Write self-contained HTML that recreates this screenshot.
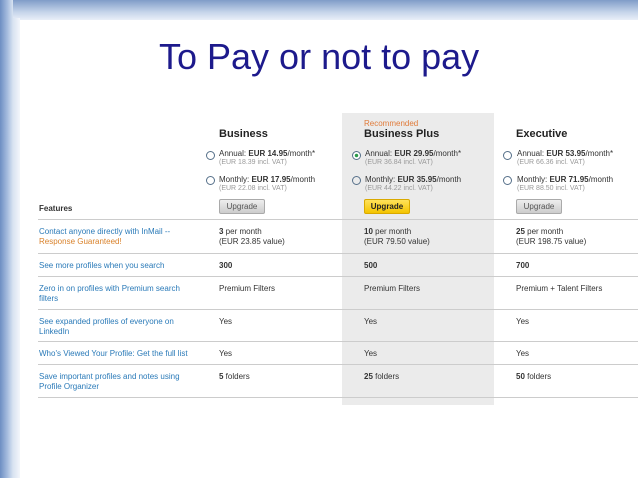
<!DOCTYPE html>
<html><head><style>
body{margin:0;width:638px;height:478px;overflow:hidden;background:#fff;position:relative;font-family:"Liberation Sans",Arial,sans-serif;}
.a{position:absolute;white-space:nowrap}
.s{font-size:8px;color:#333}
.l{font-size:8px;color:#2a7ab8}
.g{font-size:7px;color:#999}
.h{font-size:11px;font-weight:bold;color:#222}
.r{width:7px;height:7px;border:1px solid #56708a;border-radius:50%;position:absolute}
.ln{position:absolute;left:38px;right:0;height:1px;background:#ccc}
.btn{position:absolute;width:44px;height:13px;border:1px solid #aaa;border-radius:2px;background:linear-gradient(#eee,#ccc);font-size:8px;color:#555;text-align:center;line-height:13px}
</style></head><body>
<div class="a" style="left:0;top:0;width:638px;height:20px;background:linear-gradient(#7f9cc8,#c5d4ea 60%,#e9eff8)"></div>
<div class="a" style="left:0;top:0;width:13px;height:478px;background:linear-gradient(90deg,#6d8ec2,#a9bfe0 60%,#d9e3f1)"></div>
<div class="a" style="left:13px;top:18px;width:7px;height:460px;background:linear-gradient(90deg,#d9e3f1,#f3f6fb)"></div>
<div class="a" style="left:342px;top:113px;width:152px;height:292px;background:#ebebeb"></div>
<div class="a" style="left:159px;top:36px;font-size:36px;color:#1d1a8c">To Pay or not to pay</div>
<div class="a" style="left:364px;top:119px;font-size:8px;color:#e07b3a">Recommended</div>
<div class="a h" style="left:219px;top:128px">Business</div>
<div class="a h" style="left:364px;top:128px">Business Plus</div>
<div class="a h" style="left:516px;top:128px">Executive</div>

<div class="r" style="left:206px;top:151px"></div>
<div class="a s" style="left:219px;top:149px">Annual: <b>EUR 14.95</b>/month*</div>
<div class="a g" style="left:219px;top:159px">(EUR 18.39 incl. VAT)</div>
<div class="r" style="left:206px;top:176px"></div>
<div class="a s" style="left:219px;top:175px">Monthly: <b>EUR 17.95</b>/month</div>
<div class="a g" style="left:219px;top:185px">(EUR 22.08 incl. VAT)</div>
<div class="btn" style="left:219px;top:199px">Upgrade</div>

<div class="r" style="left:352px;top:151px;background:radial-gradient(#2a9a4a 30%,#fff 40%)"></div>
<div class="a s" style="left:365px;top:149px">Annual: <b>EUR 29.95</b>/month*</div>
<div class="a g" style="left:365px;top:159px">(EUR 36.84 incl. VAT)</div>
<div class="r" style="left:352px;top:176px"></div>
<div class="a s" style="left:365px;top:175px">Monthly: <b>EUR 35.95</b>/month</div>
<div class="a g" style="left:365px;top:185px">(EUR 44.22 incl. VAT)</div>
<div class="btn" style="left:364px;top:199px;background:linear-gradient(#ffe25a,#f4c400);border-color:#d9a900;color:#222;font-weight:bold">Upgrade</div>

<div class="r" style="left:503px;top:151px"></div>
<div class="a s" style="left:517px;top:149px">Annual: <b>EUR 53.95</b>/month*</div>
<div class="a g" style="left:517px;top:159px">(EUR 66.36 incl. VAT)</div>
<div class="r" style="left:503px;top:176px"></div>
<div class="a s" style="left:517px;top:175px">Monthly: <b>EUR 71.95</b>/month</div>
<div class="a g" style="left:517px;top:185px">(EUR 88.50 incl. VAT)</div>
<div class="btn" style="left:516px;top:199px">Upgrade</div>

<div class="a" style="left:39px;top:204px;font-size:8px;font-weight:bold;color:#333">Features</div>
<div class="ln" style="top:219px"></div>
<div class="a l" style="left:39px;top:227px">Contact anyone directly with InMail --</div>
<div class="a" style="left:39px;top:237px;font-size:8px;color:#d9822b">Response Guaranteed!</div>
<div class="a s" style="left:219px;top:227px;line-height:10px"><b>3</b> per month<br>(EUR 23.85 value)</div>
<div class="a s" style="left:364px;top:227px;line-height:10px"><b>10</b> per month<br>(EUR 79.50 value)</div>
<div class="a s" style="left:516px;top:227px;line-height:10px"><b>25</b> per month<br>(EUR 198.75 value)</div>
<div class="ln" style="top:253px"></div>
<div class="a l" style="left:39px;top:261px">See more profiles when you search</div>
<div class="a s" style="left:219px;top:261px"><b>300</b></div>
<div class="a s" style="left:364px;top:261px"><b>500</b></div>
<div class="a s" style="left:516px;top:261px"><b>700</b></div>
<div class="ln" style="top:276px"></div>
<div class="a l" style="left:39px;top:284px;line-height:10px">Zero in on profiles with Premium search<br>filters</div>
<div class="a s" style="left:219px;top:284px">Premium Filters</div>
<div class="a s" style="left:364px;top:284px">Premium Filters</div>
<div class="a s" style="left:516px;top:284px">Premium + Talent Filters</div>
<div class="ln" style="top:309px"></div>
<div class="a l" style="left:39px;top:317px;line-height:10px">See expanded profiles of everyone on<br>LinkedIn</div>
<div class="a s" style="left:219px;top:317px">Yes</div>
<div class="a s" style="left:364px;top:317px">Yes</div>
<div class="a s" style="left:516px;top:317px">Yes</div>
<div class="ln" style="top:341px"></div>
<div class="a l" style="left:39px;top:349px">Who's Viewed Your Profile: Get the full list</div>
<div class="a s" style="left:219px;top:349px">Yes</div>
<div class="a s" style="left:364px;top:349px">Yes</div>
<div class="a s" style="left:516px;top:349px">Yes</div>
<div class="ln" style="top:364px"></div>
<div class="a l" style="left:39px;top:372px;line-height:10px">Save important profiles and notes using<br>Profile Organizer</div>
<div class="a s" style="left:219px;top:372px"><b>5</b> folders</div>
<div class="a s" style="left:364px;top:372px"><b>25</b> folders</div>
<div class="a s" style="left:516px;top:372px"><b>50</b> folders</div>
<div class="ln" style="top:397px"></div>
</body></html>
